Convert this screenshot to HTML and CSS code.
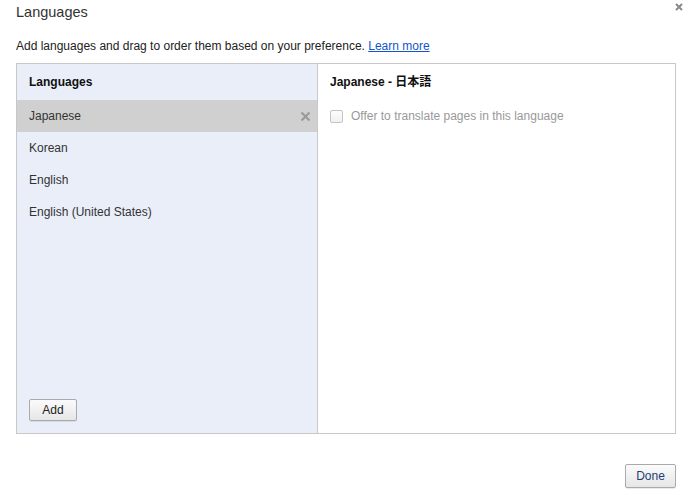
FILE: index.html
```html
<!DOCTYPE html>
<html lang="en">
<head>
    <meta charset="UTF-8">
    <title>Languages</title>
    <link rel="stylesheet" href="styles.css">
</head>
<body>
    <div class="dialog">
        <div class="dialog-head">
            <h1>Languages</h1>
            <span class="close-btn">
                <svg width="8" height="8" viewBox="0 0 8 8"><path d="M1 1 L7 7 M7 1 L1 7" stroke="#8a8a8a" stroke-width="2"/></svg>
            </span>
        </div>

        <p class="intro">Add languages and drag to order them based on your preference. <a href="#">Learn more</a></p>

        <div class="lang-box">
            <div class="lang-list">
                <div class="list-title">Languages</div>
                <ul>
                    <li class="selected">
                        <span>Japanese</span>
                        <svg class="remove" width="11" height="11" viewBox="0 0 11 11"><path d="M1.5 1.5 L9.5 9.5 M9.5 1.5 L1.5 9.5" stroke="#9a9a9a" stroke-width="2.2"/></svg>
                    </li>
                    <li>Korean</li>
                    <li>English</li>
                    <li>English (United States)</li>
                </ul>
                <div class="list-foot">
                    <button class="btn">Add</button>
                </div>
            </div>

            <div class="lang-detail">
                <div class="detail-title">Japanese - 日本語</div>
                <label class="option">
                    <span class="checkbox"></span>
                    Offer to translate pages in this language
                </label>
            </div>
        </div>

        <div class="dialog-foot">
            <button class="btn btn-done">Done</button>
        </div>
    </div>
</body>
</html>
```

FILE: styles.css
```css
/* language settings dialog */
* { box-sizing: border-box; }

body {
    margin: 0;
    background: #fff;
    color: #222;
    font-family: "Liberation Sans", Arial, "Noto Sans CJK JP", sans-serif;
    font-size: 12px;
}

.dialog {
    width: 688px;
    height: 498px;
}

.dialog-head {
    display: flex;
    justify-content: space-between;
    align-items: flex-start;
    padding: 3px 5px 0 16px;
}

h1 {
    margin: 0;
    font-size: 14.5px;
    font-weight: normal;
    line-height: 18px;
    color: #333;
}

.close-btn { display: block; margin-top: 0; line-height: 0; }

.intro {
    margin: 17px 16px 9px;
    line-height: 16px;
    font-size: 12px;
    color: #222;
}

.intro a { color: #1155cc; }

/* main box */
.lang-box {
    display: flex;
    margin: 0 12px 0 16px;
    height: 371px;
    border: 1px solid #c8c8c8;
}

.lang-list {
    width: 301px;
    background: #eaeef9;
    border-right: 1px solid #c8c8c8;
    display: flex;
    flex-direction: column;
}

.list-title, .detail-title {
    height: 36px;
    line-height: 36px;
    font-weight: bold;
    font-size: 12px;
    color: #111;
}

.list-title { padding-left: 12px; }

.lang-list ul {
    list-style: none;
    margin: 0;
    padding: 0;
    flex: 1;
}

.lang-list li {
    height: 32px;
    display: flex;
    align-items: center;
    justify-content: space-between;
    padding: 0 6px 0 12px;
    font-size: 12px;
    color: #333;
}

.lang-list li.selected { background: #d0d0d0; }

.list-foot { padding: 0 0 12px 12px; }

.btn {
    font-family: "Liberation Sans", Arial, sans-serif;
    font-size: 12px;
    color: #222;
    height: 22px;
    min-width: 48px;
    padding: 0 10px;
    border: 1px solid #aaa;
    border-radius: 2px;
    background: linear-gradient(#fbfbfb, #e6e6e6);
    box-shadow: 0 1px 0 rgba(0, 0, 0, 0.08);
}

/* right side */
.lang-detail {
    flex: 1;
    padding: 0 12px;
}

.option {
    height: 32px;
    display: flex;
    align-items: center;
    gap: 8px;
    color: #999;
    font-size: 12px;
}

.checkbox {
    width: 13px;
    height: 13px;
    border: 1px solid #c4c4c4;
    border-radius: 2px;
    background: linear-gradient(#fdfdfd, #f0f0f0);
}

.dialog-foot {
    display: flex;
    justify-content: flex-end;
    padding: 30px 12px 0 0;
}

.btn-done {
    height: 24px;
    min-width: 51px;
    color: #1d3f73;
}
```
